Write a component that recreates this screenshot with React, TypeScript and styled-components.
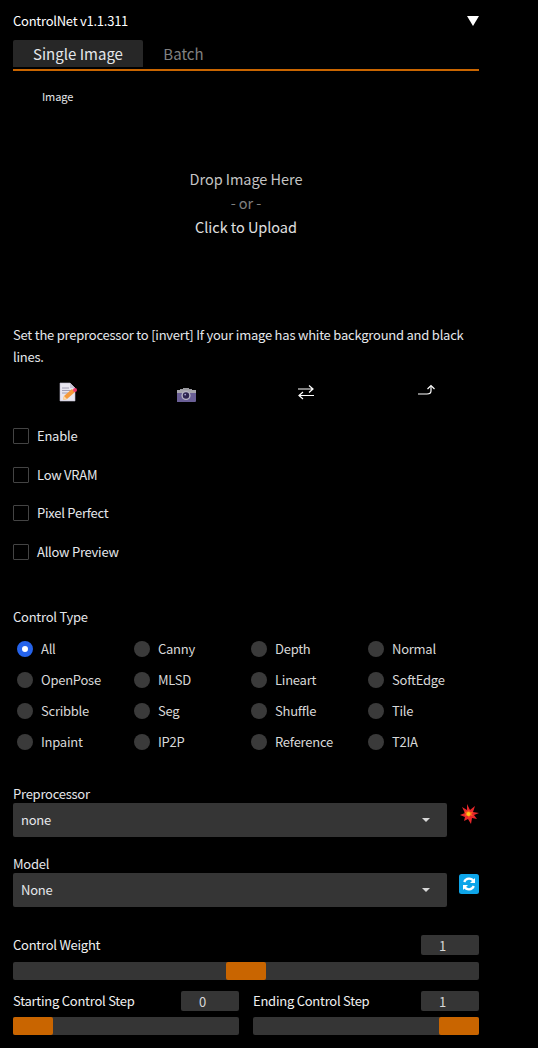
import React from "react";
import styled, { createGlobalStyle } from "styled-components";

const GlobalStyle = createGlobalStyle`
  html, body {
    margin: 0;
    padding: 0;
    background: #000;
  }
  body {
    font-family: "Noto Sans CJK SC", "Noto Sans", sans-serif;
    font-size: 13px;
    letter-spacing: -0.25px;
    color: #e5e7eb;
  }
`;

const controlTypes = [
  "All", "Canny", "Depth", "Normal",
  "OpenPose", "MLSD", "Lineart", "SoftEdge",
  "Scribble", "Seg", "Shuffle", "Tile",
  "Inpaint", "IP2P", "Reference", "T2IA",
];

const options = ["Enable", "Low VRAM", "Pixel Perfect", "Allow Preview"];

const DocIcon = () => (
  <svg width="20" height="20" viewBox="0 0 20 20">
    <path d="M2 1h10l5 5v13H2z" fill="#e8e6f0" stroke="#bdb8cc" strokeWidth="0.6" />
    <path d="M12 1l5 5h-5z" fill="#c9c4d6" />
    <path d="M4 6h7M4 8.500h9M4 11h6" stroke="#9a95ab" strokeWidth="0.9" />
    <path d="M5 18l1-4 8-7 3 3-8 7z" fill="#f59a3c" />
    <path d="M5 18l1-4 3 3z" fill="#fcd9a8" />
    <circle cx="17" cy="8" r="2" fill="#f0386b" />
  </svg>
);

const CameraIcon = () => (
  <svg width="20" height="20" viewBox="1 -5 20 20">
    <path d="M4 2h3V1h6v1h3v2H4z" fill="#9a9aa0" />
    <rect x="0" y="3" width="20" height="12" rx="1" fill="#6a5f96" />
    <rect x="0" y="3" width="20" height="3" fill="#a8a6ae" />
    <circle cx="10" cy="8.500" r="4.600" fill="#b9b6c6" />
    <circle cx="10" cy="8.500" r="3.200" fill="#2e2450" />
    <circle cx="9.200" cy="7.600" r="0.900" fill="#a9a3cf" />
  </svg>
);

const SwapIcon = () => (
  <svg width="20" height="16" viewBox="0 0 20 16" fill="none" stroke="#fff" strokeWidth="1.2">
    <path d="M2 5h15M13 1.500L17 5l-4 3.500" />
    <path d="M18 11.500H3M7 8l-4 3.500L7 15" />
  </svg>
);

const ReturnIcon = () => (
  <svg width="20" height="20" viewBox="-1 -2 20 20" fill="none" stroke="#fff" strokeWidth="1.2">
    <path d="M2 10h9c3 0 4-1 4-3V2" />
    <path d="M11.500 5L15 1.500 18.500 5" />
  </svg>
);

const BoomIcon = () => (
  <svg width="20" height="20" viewBox="0 0 20 20">
    <path
      d="M8 0l3 6 5-4-2 6 6 1-5 2 3 4-5-1-1 6-3-5-4 2 1-4-5-2 5-2-3-6 5 3z"
      fill="#e8272b"
    />
    <path d="M10 6l1 2 3 0-1.500 2 1.500 2-3-.5-1 2.500-1.500-2.500-2.500 .5 1-2.500-2-1.500 3-.5z" fill="#f7631c" />
    <circle cx="9.500" cy="10" r="2" fill="#fcc419" />
  </svg>
);

const RefreshIcon = () => (
  <svg width="20" height="20" viewBox="0 0 20 20">
    <rect width="20" height="20" rx="2.500" fill="#0ea5e9" />
    <path d="M14.600 7.400A5.200 5.200 0 0 0 5.200 8" fill="none" stroke="#fff" strokeWidth="2.200" />
    <path d="M16 4v5h-5z" fill="#fff" />
    <path d="M5.400 12.600A5.200 5.200 0 0 0 14.800 12" fill="none" stroke="#fff" strokeWidth="2.200" />
    <path d="M4 16v-5h5z" fill="#fff" />
  </svg>
);

const App = () => {
  return (
    <Page>
      <GlobalStyle />
      <Header>
        <Title>ControlNet v1.1.311</Title>
        <Caret />
      </Header>
      <TabBar>
        <Tab $active>Single Image</Tab>
        <Tab>Batch</Tab>
      </TabBar>
      <ImageLabel>Image</ImageLabel>
      <DropZone>
        <DropLine>Drop Image Here</DropLine>
        <DropOr>- or -</DropOr>
        <UploadLine>Click to Upload</UploadLine>
      </DropZone>
      <Hint>Set the preprocessor to [invert] If your image has white background and black lines.</Hint>
      <IconRow>
        <IconButton><DocIcon /></IconButton>
        <IconButton><CameraIcon /></IconButton>
        <IconButton><SwapIcon /></IconButton>
        <IconButton><ReturnIcon /></IconButton>
      </IconRow>
      <CheckList>
        {options.map((option) => (
          <CheckRow key={option}>
            <CheckBox />
            {option}
          </CheckRow>
        ))}
      </CheckList>
      <TypeLabel>Control Type</TypeLabel>
      <RadioGrid>
        {controlTypes.map((type, index) => (
          <RadioItem key={type}>
            <Radio $checked={index === 0} />
            {type}
          </RadioItem>
        ))}
      </RadioGrid>
      <PreprocessorBlock>
        <FieldLabel>Preprocessor</FieldLabel>
        <SelectRow>
          <Select>
            none
            <SelectCaret />
          </Select>
          <SelectIcon><BoomIcon /></SelectIcon>
        </SelectRow>
      </PreprocessorBlock>
      <ModelBlock>
        <FieldLabel>Model</FieldLabel>
        <SelectRow>
          <Select>
            None
            <SelectCaret />
          </Select>
          <SelectIcon><RefreshIcon /></SelectIcon>
        </SelectRow>
      </ModelBlock>
      <WeightBlock>
        <SliderHead $gap={7}>
          <SliderLabel>Control Weight</SliderLabel>
          <NumberBox>1</NumberBox>
        </SliderHead>
        <Track>
          <Thumb style={{ left: "calc((100% - 40px) * 0.5)" }} />
        </Track>
      </WeightBlock>
      <SliderPair>
        <SliderBlock>
          <SliderHead $gap={6}>
            <SliderLabel>Starting Control Step</SliderLabel>
            <NumberBox>0</NumberBox>
          </SliderHead>
          <Track>
            <Thumb style={{ left: 0 }} />
          </Track>
        </SliderBlock>
        <SliderBlock>
          <SliderHead $gap={6}>
            <SliderLabel>Ending Control Step</SliderLabel>
            <NumberBox>1</NumberBox>
          </SliderHead>
          <Track>
            <Thumb style={{ right: 0 }} />
          </Track>
        </SliderBlock>
      </SliderPair>
    </Page>
  );
};

export default App;

const Page = styled.div`
  width: 466px;
  height: 1048px;
  padding-left: 13px;
  overflow: hidden;
  line-height: 20px;
`;

const Header = styled.div`
  height: 40px;
  padding-top: 11px;
  box-sizing: border-box;
  display: flex;
  justify-content: space-between;
`;

const Title = styled.span`
  color: #fff;
`;

const Caret = styled.span`
  width: 0;
  height: 0;
  margin-top: 5px;
  border-left: 6px solid transparent;
  border-right: 6px solid transparent;
  border-top: 10px solid #fff;
`;

const TabBar = styled.div`
  height: 31px;
  box-sizing: border-box;
  display: flex;
  border-bottom: 2px solid #c96500;
`;

const Tab = styled.div<{ $active?: boolean }>`
  width: 130px;
  height: 27px;
  text-align: center;
  font-size: 15px;
  letter-spacing: 0;
  line-height: 27px;
  border-radius: 2px 2px 0 0;
  color: ${(p) => (p.$active ? "#e5e7eb" : "#808080")};
  background: ${(p) => (p.$active ? "#272727" : "transparent")};
  &:last-child {
    width: 81px;
  }
`;

const ImageLabel = styled.div`
  margin: 15px 0 0 29px;
  font-size: 11px;
  letter-spacing: -0.1px;
  line-height: 20px;
  color: #e5e7eb;
`;

const DropZone = styled.div`
  margin-top: 61px;
  height: 129px;
  display: flex;
  flex-direction: column;
  align-items: center;
  font-size: 14.5px;
  letter-spacing: -0.05px;
  line-height: 24px;
  margin-left: -13px;
  width: 492px;
`;

const DropLine = styled.div`
  color: #c4c4c4;
`;

const DropOr = styled.div`
  color: #808080;
`;

const UploadLine = styled.div`
  color: #e0e0e0;
`;

const Hint = styled.p`
  margin: 0;
  padding-top: 28px;
  width: 466px;
  line-height: 22px;
  letter-spacing: -0.225px;
  color: #e5e7eb;
`;

const IconRow = styled.div`
  display: flex;
  align-items: flex-start;
  gap: 99px;
  height: 49px;
  padding: 14px 0 0 45px;
  box-sizing: border-box;
`;

const IconButton = styled.div`
  width: 20px;
  height: 20px;
  display: flex;
  align-items: center;
  justify-content: center;
`;

const CheckList = styled.div`
  display: flex;
  flex-direction: column;
`;

const CheckRow = styled.label`
  height: 38.5px;
  display: flex;
  align-items: center;
  gap: 8px;
  color: #e5e7eb;
`;

const CheckBox = styled.span`
  width: 16px;
  height: 16px;
  box-sizing: border-box;
  border: 1px solid #444;
  border-radius: 1px;
  background: #000;
`;

const TypeLabel = styled.div`
  margin-top: 36px;
`;

const RadioGrid = styled.div`
  margin-top: 6px;
  display: grid;
  grid-template-columns: repeat(4, 117px);
  grid-auto-rows: 31px;
  padding-left: 4px;
`;

const RadioItem = styled.label`
  display: flex;
  align-items: center;
  gap: 8px;
  color: #d8d8d8;
`;

const Radio = styled.span<{ $checked?: boolean }>`
  width: 16px;
  height: 16px;
  box-sizing: border-box;
  border-radius: 50%;
  background: ${(p) => (p.$checked ? "#fff" : "#3a3a3a")};
  border: ${(p) => (p.$checked ? "5px solid #2563eb" : "none")};
`;

const PreprocessorBlock = styled.div`
  margin-top: 28px;
`;

const ModelBlock = styled.div`
  margin-top: 18px;
`;

const FieldLabel = styled.div`
  line-height: 18px;
`;

const SelectRow = styled.div`
  display: flex;
  align-items: flex-start;
  gap: 12px;
`;

const SelectIcon = styled.span`
  display: block;
  padding-top: 1px;
`;

const Select = styled.div`
  width: 434px;
  height: 34px;
  box-sizing: border-box;
  padding: 0 8px;
  display: flex;
  align-items: center;
  justify-content: space-between;
  border-radius: 2px;
  background: #353535;
  color: #e5e7eb;
`;

const SelectCaret = styled.span`
  width: 0;
  height: 0;
  margin-right: 9px;
  border-left: 4px solid transparent;
  border-right: 4px solid transparent;
  border-top: 4px solid #d8d8d8;
`;

const SliderBlock = styled.div`
  flex: 1;
`;

const WeightBlock = styled(SliderBlock)`
  margin-top: 28px;
`;

const SliderHead = styled.div<{ $gap: number }>`
  height: 20px;
  margin-bottom: ${(p) => p.$gap}px;
  display: flex;
  align-items: center;
  justify-content: space-between;
`;

const SliderLabel = styled.span`
  color: #f0f0f0;
`;

const NumberBox = styled.span`
  width: 58px;
  height: 20px;
  box-sizing: border-box;
  padding-right: 15px;
  border-radius: 2px;
  background: #353535;
  text-align: center;
  line-height: 21px;
  color: #d8d8d8;
`;

const Track = styled.div`
  position: relative;
  height: 18px;
  border-radius: 2px;
  background: #353535;
`;

const Thumb = styled.span`
  position: absolute;
  top: 0;
  width: 40px;
  height: 18px;
  border-radius: 2px;
  background: #c96500;
`;

const SliderPair = styled.div`
  display: flex;
  gap: 14px;
  margin-top: 11px;
`;
